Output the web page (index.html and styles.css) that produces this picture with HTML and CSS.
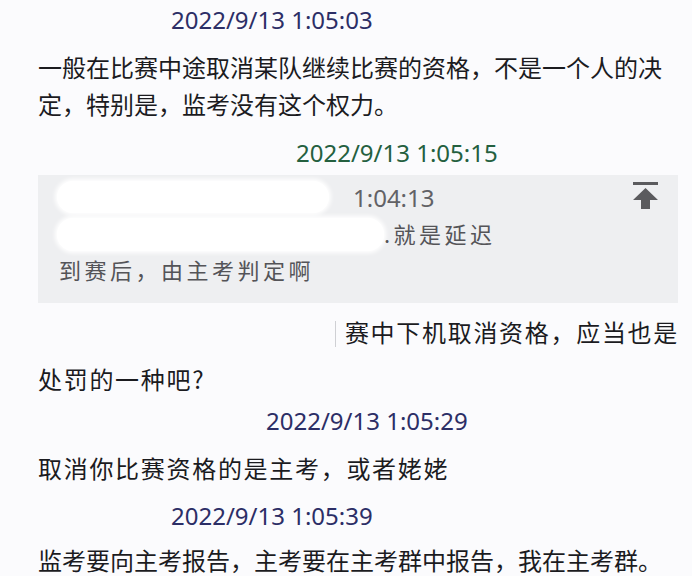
FILE: index.html
```html
<!DOCTYPE html>
<html lang="zh-CN">
<head>
<meta charset="utf-8">
<title>聊天记录</title>
<link rel="stylesheet" href="styles.css">
</head>
<body>
<div class="log">
  <div class="ts ts-a navy">2022/9/13 1:05:03</div>
  <div class="msg m1">一般在比赛中途取消某队继续比赛的资格，不是一个人的决定，特别是，监考没有这个权力。</div>

  <div class="ts ts-b green">2022/9/13 1:05:15</div>
  <div class="quote">
    <div class="q-row q-head">
      <span class="blob blob-1"></span>
      <span class="q-time">1:04:13</span>
      <svg class="q-top" viewBox="0 0 26 27" width="26" height="27" aria-hidden="true">
        <rect x="0" y="0" width="25" height="3" fill="#5b5b5e"/>
        <polygon points="12.5,6 25,18 17,18 17,27 8,27 8,18 0,18" fill="#5b5b5e"/>
      </svg>
    </div>
    <div class="q-row">
      <span class="blob blob-2"></span><span class="q-text">.就是延迟</span>
    </div>
    <div class="q-row"><span class="q-text">到赛后，由主考判定啊</span></div>
  </div>

  <div class="msg split wide">
    <div class="split-first"><span class="cut"></span>赛中下机取消资格，应当也是</div>
    <div class="split-rest">处罚的一种吧?</div>
  </div>

  <div class="ts ts-c navy">2022/9/13 1:05:29</div>
  <div class="msg m3 wide">取消你比赛资格的是主考，或者姥姥</div>

  <div class="ts ts-d navy">2022/9/13 1:05:39</div>
  <div class="msg m4">监考要向主考报告，主考要在主考群中报告，我在主考群。</div>
</div>
</body>
</html>
```

FILE: styles.css
```css
html, body {
  margin: 0;
  padding: 0;
  background: #fbfbfd;
}

body {
  width: 692px;
  height: 576px;
  overflow: hidden;
  font-family: "Noto Sans CJK SC", "Noto Sans", sans-serif;
  color: #1b1b1f;
}

.log {
  display: flex;
  flex-direction: column;
  align-items: flex-start;
  padding-left: 38px;
}

.ts {
  font-family: "Noto Sans", "Noto Sans CJK SC", sans-serif;
  font-size: 24px;
  line-height: 40px;
  height: 40px;
  white-space: nowrap;
}

.navy { color: #2c2e66; }
.green { color: #24603f; }

.ts-a { padding-left: 133px; }
.ts-b { padding-left: 258px; margin-top: 11px; }
.ts-c { padding-left: 228px; margin-top: 4px; }
.ts-d { padding-left: 133px; margin-top: 10px; }

.msg {
  font-size: 24px;
  line-height: 37px;
  max-width: 636px;
}

.wide { letter-spacing: 1.7px; }

.m1 { margin-top: 8px; }
.m3 { margin-top: 8px; }
.m4 {
  margin-top: 8px;
  line-height: 32px;
}

.quote {
  margin-top: 2px;
  width: 640px;
  height: 128px;
  box-sizing: border-box;
  background: #eeeff1;
  padding: 4px 19px 0 21px;
  color: #545458;
}

.q-row {
  display: flex;
  align-items: center;
  height: 36px;
  white-space: nowrap;
}

.blob {
  display: inline-block;
  background: #ffffff;
  border-radius: 16px;
  box-shadow: 0 0 4px 2px #ffffff;
  margin-left: -2px;
}

.blob-1 { width: 272px; height: 32px; }
.blob-2 { width: 327px; height: 33px; margin-top: 2px; }

.q-time {
  font-family: "Noto Sans", sans-serif;
  font-size: 24px;
  margin-left: 24px;
  color: #626266;
}

.q-top {
  margin-left: auto;
  margin-top: -4px;
  display: block;
}

.q-text {
  font-size: 22px;
  letter-spacing: 3.5px;
}

.split {
  align-self: stretch;
  margin-top: 10px;
  max-width: none;
}

.split-first {
  text-align: right;
  padding-right: 13px;
}

.cut {
  display: inline-block;
  width: 1px;
  height: 26px;
  background: #cfd0d4;
  vertical-align: -5px;
  margin-right: 9px;
}

.split-rest {
  margin-top: 10px;
}
```
